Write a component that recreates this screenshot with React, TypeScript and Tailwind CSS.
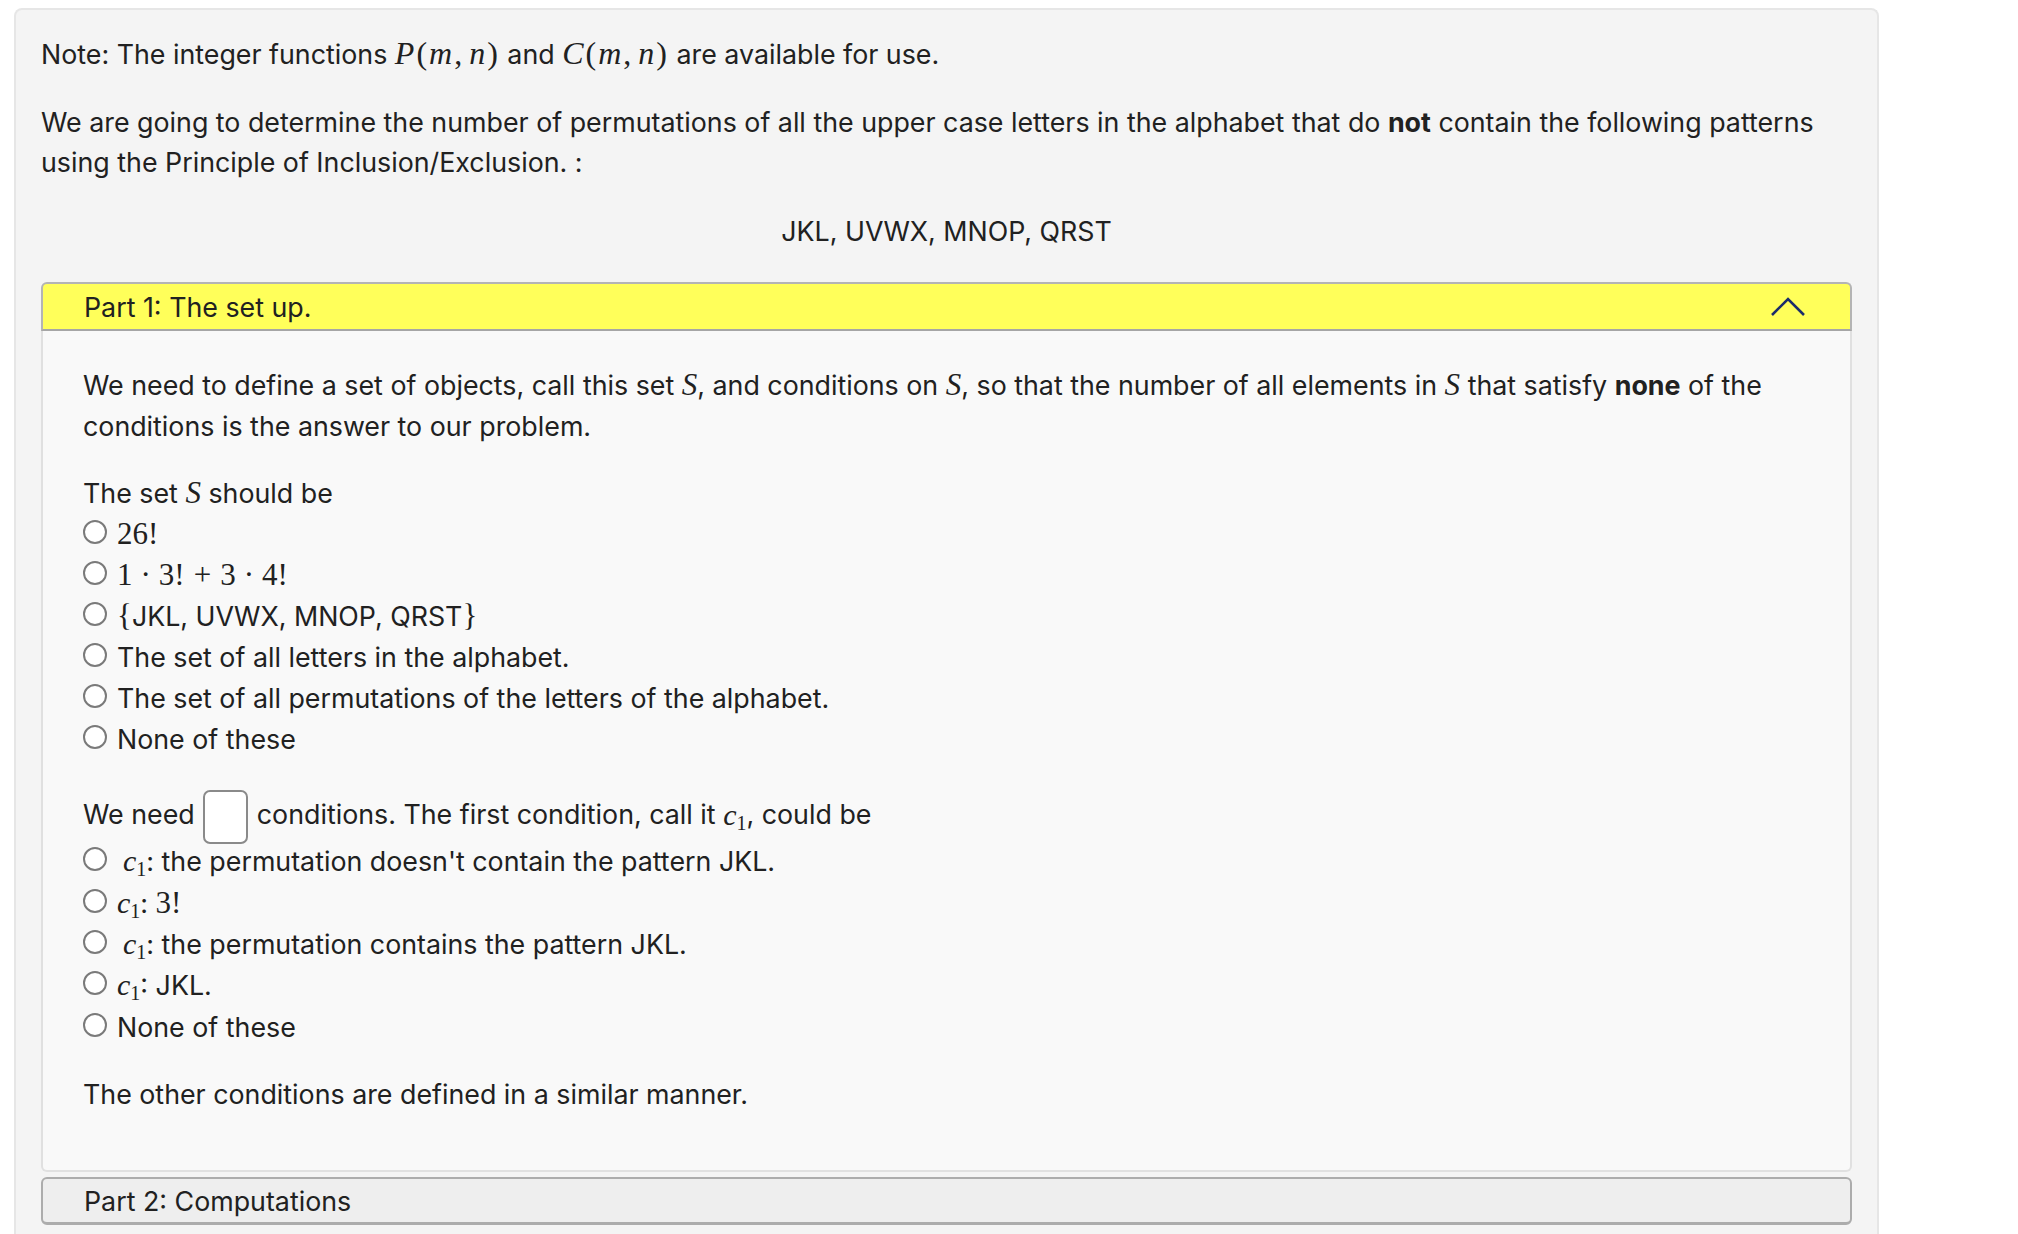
import React from "react";

const serif = "font-['Liberation_Serif',serif]";

function M({ children }: { children: React.ReactNode }) {
  return <span className={`${serif} text-[31px]`}>{children}</span>;
}

function Fn({ f }: { f: string }) {
  return (
    <span className={`${serif} text-[32px] tracking-[2px]`}>
      <i>{f}</i>(<i>m</i>,<span className="ml-[5px]" />
      <i>n</i>)
    </span>
  );
}

function Radio({
  children,
  shift = false,
  tall = false,
}: {
  children: React.ReactNode;
  shift?: boolean;
  tall?: boolean;
}) {
  return (
    <div className={tall ? "h-[41.4px]" : "h-[41.1px]"}>
      <span className="inline-block w-[24px] h-[24px] rounded-full border-2 border-[#7a7a7a] bg-white mr-[10px]" />
      <span className={shift ? "ml-[6px]" : ""}>{children}</span>
    </div>
  );
}

function C1() {
  return (
    <span className={`${serif} text-[30px]`}>
      <i>c</i>
      <sub className="text-[20px] not-italic">1</sub>
    </span>
  );
}

export default function App() {
  return (
    <div className="min-h-screen bg-white pl-[14px] pt-[8px] font-['Inter',sans-serif] text-[#212121]">
      <div className="w-[1865px] h-[1240px] rounded-t-[8px] border-2 border-b-0 border-[#e6e6e6] bg-[#f4f4f4] px-[25px] pt-[23px] text-[26.8px] leading-[40.6px]">
        <p className="mb-[27px]">
          Note: The integer functions <Fn f="P" /> and <Fn f="C" /> are available for use.
        </p>
        <p className="mb-[28px]">
          We are going to determine the number of permutations of all the upper case letters in the alphabet that do{" "}
          <b className="font-bold">not</b> contain the following patterns using the Principle of Inclusion/Exclusion. :
        </p>
        <p className="mb-[31px] text-center">JKL, UVWX, MNOP, QRST</p>

        <div className="flex items-center justify-between rounded-t-[6px] border-2 border-[#b4b4b4] border-b-[#a6a6a6] bg-[#ffff5a] pl-[41px] pr-[44px] pt-[3px] pb-[1px]">
          <span>Part 1: The set up.</span>
          <svg width="36" height="22" viewBox="0 0 36 22" className="mt-[-2px]">
            <polyline points="2,19 18,3 34,19" fill="none" stroke="#1b2d6b" strokeWidth="2.6" />
          </svg>
        </div>

        <div className="rounded-b-[6px] border-2 border-t-0 border-[#e0e0e0] bg-[#f9f9f9] px-[40px] pt-[34px] pb-[55px]">
          <p className="mb-[27px]">
            We need to define a set of objects, call this set{" "}
            <M>
              <i>S</i>
            </M>
            , and conditions on{" "}
            <M>
              <i>S</i>
            </M>
            , so that the number of all elements in{" "}
            <M>
              <i>S</i>
            </M>{" "}
            that satisfy <b className="font-bold">none</b> of the conditions is the answer to our problem.
          </p>

          <div className="mb-[30px]">
            <div>
              The set{" "}
              <M>
                <i>S</i>
              </M>{" "}
              should be
            </div>
            <Radio>
              <M>26!</M>
            </Radio>
            <Radio>
              <M>
                1<span className="mx-[8px]">·</span>3!<span className="mx-[9px]">+</span>3<span className="mx-[8px]">·</span>4!
              </M>
            </Radio>
            <Radio>
              <M>{"{"}</M>JKL, UVWX, MNOP, QRST<M>{"}"}</M>
            </Radio>
            <Radio>The set of all letters in the alphabet.</Radio>
            <Radio>The set of all permutations of the letters of the alphabet.</Radio>
            <Radio>None of these</Radio>
          </div>

          <div className="mb-[26px]">
            <div>
              We need{" "}
              <span className="mx-[1px] inline-block h-[54px] w-[45px] rounded-[7px] border-2 border-[#8a8a8a] bg-white align-middle" />{" "}
              conditions. The first condition, call it <C1 />, could be
            </div>
            <div className="mt-[-3px]">
              <Radio shift tall>
                <C1 />: the permutation doesn't contain the pattern JKL.
              </Radio>
              <Radio tall>
                <C1 />: <M>3!</M>
              </Radio>
              <Radio shift tall>
                <C1 />: the permutation contains the pattern JKL.
              </Radio>
              <Radio tall>
                <C1 />: JKL.
              </Radio>
              <Radio tall>None of these</Radio>
            </div>
          </div>

          <p>The other conditions are defined in a similar manner.</p>
        </div>

        <div className="mt-[5px] rounded-[6px] border-2 border-[#acacac] border-b-[3px] bg-[#eeeeee] pl-[41px] pt-[2px] pb-[1px]">
          Part 2: Computations
        </div>
      </div>
    </div>
  );
}
